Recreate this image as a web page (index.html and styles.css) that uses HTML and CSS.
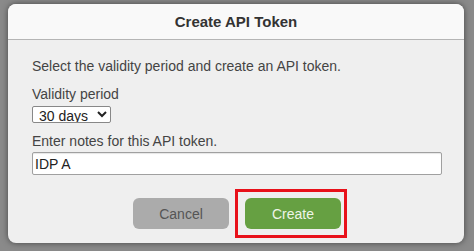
FILE: index.html
```html
<!DOCTYPE html>
<html>
<head>
    <title>Create API Token</title>
    <link rel="stylesheet" href="styles.css">
</head>
<body>
    <div class="dialog">
        <div class="dialog-header">
            <span>Create API Token</span>
        </div>
        <div class="dialog-body">
            <p class="intro">Select the validity period and create an API token.</p>
            <label class="field-label period-label">Validity period</label>
            <select class="period">
                <option>30 days</option>
                <option>60 days</option>
                <option>90 days</option>
            </select>
            <label class="field-label notes-label">Enter notes for this API token.</label>
            <input type="text" class="notes" value="IDP A">
            <div class="actions">
                <button class="button-cancel">Cancel</button>
                <div class="highlight">
                    <button class="button-create">Create</button>
                </div>
            </div>
        </div>
    </div>
</body>
</html>
```

FILE: styles.css
```css
body {
    margin: 0;
    padding: 4px 8px;
    background: #8a8a8a;
    font-family: 'Liberation Sans', Arial, sans-serif;
    height: 251px;
    box-sizing: border-box;
}

.dialog {
    width: 456px;
    height: 239px;
    border-radius: 8px;
    background: #efefef;
    box-shadow: 0 0 6px rgba(0, 0, 0, 0.5);
    overflow: hidden;
    display: flex;
    flex-direction: column;
}

.dialog-header {
    height: 36px;
    display: flex;
    justify-content: center;
    align-items: center;
    background: #f9f9f9;
    border-bottom: 1px solid #b5b5b5;
    color: #333;
    font-size: 15px;
    font-weight: bold;
    box-sizing: border-box;
}

.dialog-body {
    display: flex;
    flex-direction: column;
    align-items: flex-start;
    padding: 18px 24px 0 24px;
    color: #444;
    font-size: 14px;
}

.intro {
    margin: 0 0 12px 0;
}

.field-label {
    display: block;
}

.period-label {
    margin-bottom: 4px;
}

.period {
    width: 79px;
    height: 17px;
    padding: 0 2px;
    font-family: inherit;
    font-size: 14px;
    color: #222;
    background: #fff;
    border: 1px solid #888;
    border-radius: 2px;
}

.notes-label {
    margin-top: 10px;
    margin-bottom: 3px;
}

.notes {
    width: 410px;
    height: 23px;
    box-sizing: border-box;
    padding: 0 2px;
    font-family: inherit;
    font-size: 14px;
    color: #222;
    border: 1px solid #a0a0a0;
    border-radius: 2px;
    box-shadow: inset 0 1px 1px rgba(0, 0, 0, 0.1);
    outline: none;
}

.actions {
    display: flex;
    align-items: center;
    gap: 6px;
    margin-top: 14px;
    padding-left: 101px;
}

button {
    height: 31px;
    width: 96px;
    border: none;
    border-radius: 6px;
    font-family: inherit;
    font-size: 14px;
    cursor: pointer;
}

.button-cancel {
    background: #ababab;
    color: #555;
}

.button-create {
    background: #66a042;
    color: #eef5e8;
}

.highlight {
    border: 3px solid #e8111a;
    padding: 6px 3px 6px 7px;
}
```
